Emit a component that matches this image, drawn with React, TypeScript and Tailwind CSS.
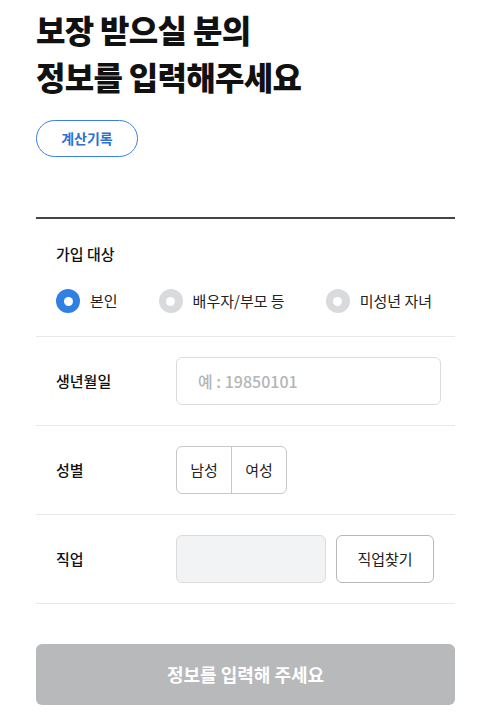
import React from "react";

const font = { fontFamily: '"Noto Sans CJK KR", "Noto Sans", sans-serif' };

function Radio({ checked, label }: { checked?: boolean; label: string }) {
  return (
    <label className="flex shrink-0 items-center gap-[10px] whitespace-nowrap">
      <span
        className={
          "flex h-[24px] w-[24px] shrink-0 items-center justify-center rounded-full " +
          (checked ? "bg-[#2f80e2]" : "bg-[#d9dadd]")
        }
      >
        <span className="h-[9px] w-[9px] rounded-full bg-white" />
      </span>
      <span className="text-[15px] leading-[22px] text-[#222]">{label}</span>
    </label>
  );
}

export default function App() {
  return (
    <div className="min-h-[728px] bg-white pl-9 pr-[25px] text-[#111]" style={font}>
      <h1 className="pt-[6px] text-[32px] font-black leading-[47px] tracking-[-0.7px] text-[#111]">
        보장 받으실 분의
        <br />
        정보를 입력해주세요
      </h1>
      <button className="mt-5 flex h-[37px] w-[102px] items-center justify-center rounded-full border border-[#3a80e4] text-[14px] font-bold text-[#2f6fd0]">
        계산기록
      </button>

      <div className="mt-[60px] border-t-2 border-[#444]">
        <div className="border-b border-[#e8e8e8] px-5 pb-[23px] pt-6">
          <div className="text-[15px] font-medium leading-[22px] text-[#111]">가입 대상</div>
          <div className="mt-6 flex items-center gap-[41px]">
            <Radio checked label="본인" />
            <Radio label="배우자/부모 등" />
            <Radio label="미성년 자녀" />
          </div>
        </div>

        <div className="flex items-center border-b border-[#e8e8e8] px-5 py-5">
          <div className="w-[120px] shrink-0 text-[15px] font-medium text-[#111]">생년월일</div>
          <div className="flex h-[48px] w-[265px] shrink-0 items-center rounded-md border border-[#dcdcdc] px-[21px] text-[16px] font-medium text-[#b3b5b9]">
            예 : 19850101
          </div>
        </div>

        <div className="flex items-center border-b border-[#e8e8e8] px-5 py-5">
          <div className="w-[120px] shrink-0 text-[15px] font-medium text-[#111]">성별</div>
          <div className="flex h-[48px] overflow-hidden rounded-md border border-[#c8c8c8] text-[15px] text-[#222]">
            <div className="flex w-[55px] items-center justify-center border-r border-[#c8c8c8]">남성</div>
            <div className="flex w-[54px] items-center justify-center">여성</div>
          </div>
        </div>

        <div className="flex items-center border-b border-[#e8e8e8] px-5 py-5">
          <div className="w-[120px] shrink-0 text-[15px] font-medium text-[#111]">직업</div>
          <div className="h-[48px] w-[150px] shrink-0 rounded-md border border-[#dcdcdc] bg-[#f2f3f5]" />
          <button className="ml-[10px] flex h-[48px] w-[98px] shrink-0 items-center justify-center rounded-md border border-[#b8b8b8] text-[15px] text-[#222]">
            직업찾기
          </button>
        </div>
      </div>

      <button className="mt-10 flex h-[61px] w-full items-center justify-center rounded-md bg-[#b8b9bb] text-[18px] font-bold text-white">
        정보를 입력해 주세요
      </button>
    </div>
  );
}
